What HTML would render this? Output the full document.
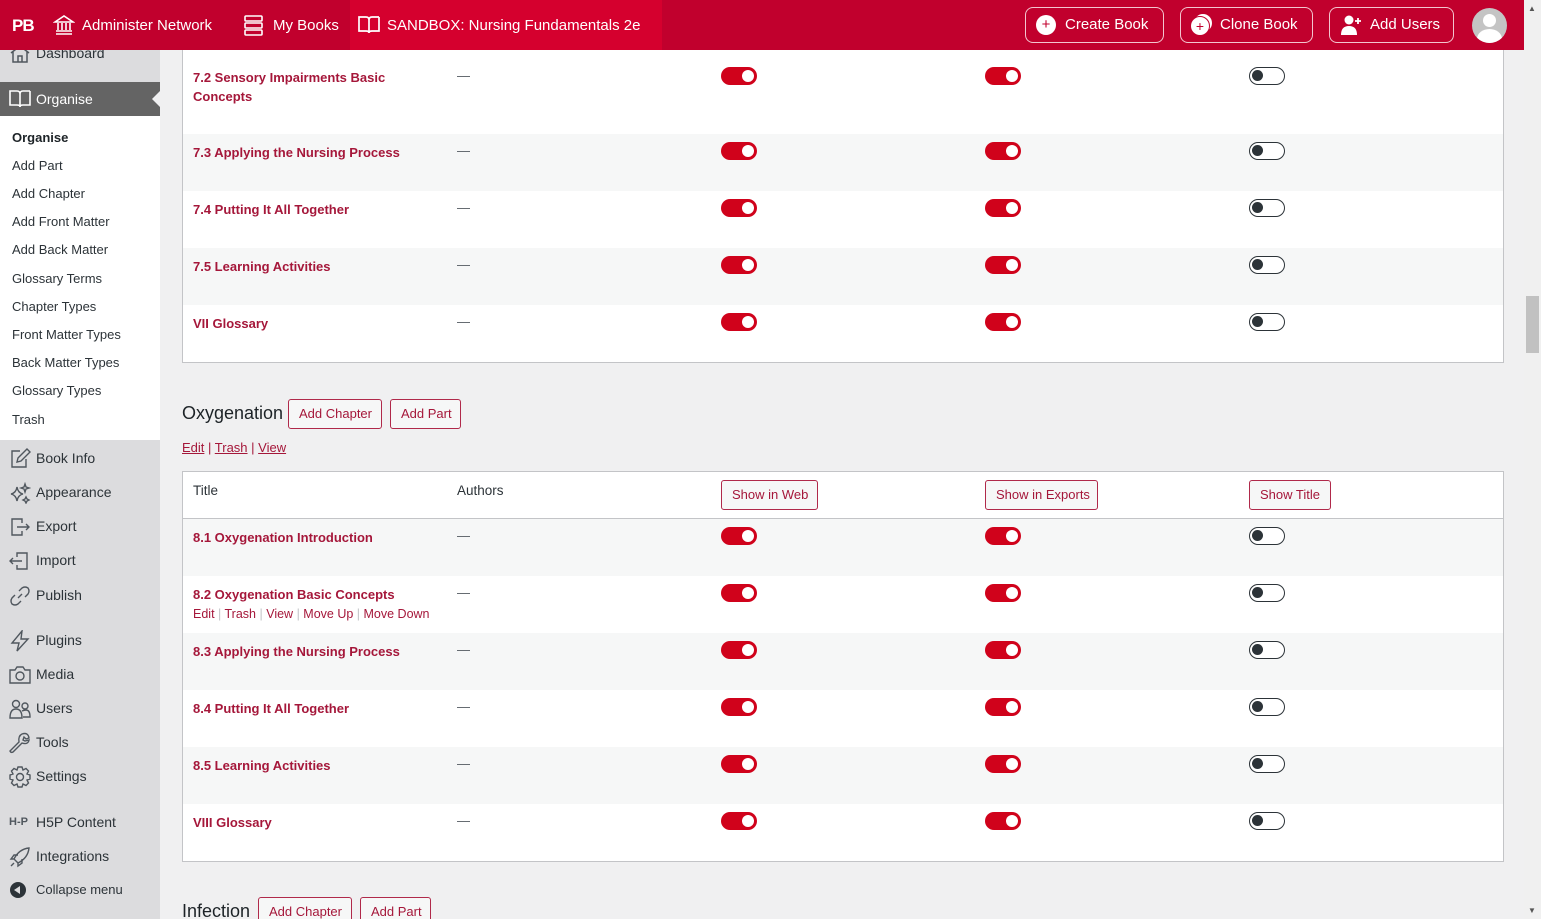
<!DOCTYPE html>
<html style="width:1541px;height:919px;overflow:hidden"><head><meta charset="utf-8">
<style>
*{box-sizing:border-box;margin:0;padding:0}
body{width:1541px;height:919px;overflow:hidden;background:#f0f0f1;font-family:"Liberation Sans",sans-serif;color:#1d2327;position:relative}
.a{position:absolute}
#top{left:0;top:0;width:1524px;height:50px;background:#c1002d;z-index:10}
#top .t{position:absolute;top:1px;height:50px;line-height:50px;color:#fff;font-size:15px;white-space:nowrap}
.tb{position:absolute;top:7px;height:36px;border:1px solid #f3c5cf;border-radius:8px;color:#fff;font-size:15px;line-height:34px;white-space:nowrap}
#side{left:0;top:50px;width:160px;height:869px;background:#dcdcde;z-index:5}
.sub{position:absolute;left:12px;font-size:13px;color:#2c3338}
.mi{position:absolute;left:36px;font-size:14px;color:#2c3338}
.ic{position:absolute;left:9px}
.tbl{position:absolute;left:182px;width:1322px;background:#fff;border:1px solid #c3c4c7}
.row{position:absolute;left:0;width:1320px;height:57px}
.row.g{background:#f6f7f7}
.tt{position:absolute;left:10px;top:9px;font-size:13px;font-weight:bold;color:#a5173a;line-height:19px}
.au{position:absolute;left:274px;top:9px;font-size:13px;color:#50575e}
.on,.off{position:absolute;top:8px;width:36px;height:18px;border-radius:9px}
.on{background:#d0021b}
.on::after{content:"";position:absolute;right:3px;top:3px;width:12px;height:12px;border-radius:50%;background:#fff}
.off{border:1.5px solid #2c3338;background:#fff}
.off::after{content:"";position:absolute;left:2px;top:2px;width:11px;height:11px;border-radius:50%;background:#2c3338}
.btn{position:absolute;height:30px;border:1px solid #b0294a;border-radius:3px;background:#f6f7f7;color:#a5173a;font-size:13px;line-height:28px;padding:0 10px;white-space:nowrap}
.ra{position:absolute;left:10px;top:31px;font-size:12.5px;color:#a5173a}
.ra span{color:#c3c4c7}
h2{position:absolute;font-size:18px;font-weight:normal;color:#1d2327}
.ul{font-size:13px;color:#a5173a}
.ul a{color:#a5173a;text-decoration:underline}
</style></head><body>

<div class="a" id="top">
  <div class="t" style="left:12px;font-weight:bold;font-size:17px;letter-spacing:-1px">PB</div>
  <svg class="a" style="left:53px;top:14px" width="22" height="22" viewBox="0 0 22 22" fill="none" stroke="#fff" stroke-width="1.6"><path d="M2 8 L11 2 L20 8 Z M3 20 H19 M3 17 H19 M5 9 V16 M9 9 V16 M13 9 V16 M17 9 V16"/></svg>
  <div class="t" style="left:82px">Administer Network</div>
  <svg class="a" style="left:243px;top:14px" width="22" height="22" viewBox="0 0 22 22" fill="none" stroke="#fff" stroke-width="1.6"><rect x="2" y="2" width="17" height="5" rx="1"/><rect x="2" y="9" width="17" height="5" rx="1"/><rect x="2" y="16" width="17" height="5" rx="1"/></svg>
  <div class="t" style="left:273px">My Books</div>
  <div class="a" style="left:350px;top:0;width:312px;height:50px;background:#d5002e"></div>
  <svg class="a" style="left:358px;top:15px" width="22" height="20" viewBox="0 0 22 20" fill="none" stroke="#fff" stroke-width="1.7"><path d="M1 2 H8 Q11 2 11 5 V18 Q11 16 8 16 H1 Z M21 2 H14 Q11 2 11 5 M21 2 V16 H14 Q11 16 11 18"/></svg>
  <div class="t" style="left:387px">SANDBOX: Nursing Fundamentals 2e</div>
  <div class="tb" style="left:1025px;width:139px"><span class="a" style="left:10px;top:7px;width:20px;height:20px;border-radius:50%;background:#fff;color:#c1002d;text-align:center;line-height:20px;font-size:15px">+</span><span style="margin-left:39px">Create Book</span></div>
  <div class="tb" style="left:1180px;width:133px"><span class="a" style="left:12px;top:5px;width:20px;height:20px;border-radius:50%;background:#fff;border:1px solid #c1002d"></span><span class="a" style="left:9px;top:8px;width:20px;height:20px;border-radius:50%;background:#fff;border:1px solid #c1002d;color:#c1002d;text-align:center;line-height:18px;font-size:14px">+</span><span style="margin-left:39px">Clone Book</span></div>
  <div class="tb" style="left:1329px;width:125px"><svg class="a" style="left:10px;top:7px" width="24" height="20" viewBox="0 0 24 20" fill="#fff"><circle cx="9" cy="5" r="4.5"/><path d="M1 20 Q1 11 9 11 Q17 11 17 20 Z"/><path d="M18 3 V9 M15 6 H21" stroke="#fff" stroke-width="1.8"/></svg><span style="margin-left:40px">Add Users</span></div>
  <div class="a" style="left:1472px;top:8px;width:35px;height:35px;border-radius:50%;background:#c4c4c4;overflow:hidden"><div class="a" style="left:11px;top:6px;width:13px;height:13px;border-radius:50%;background:#fff"></div><div class="a" style="left:5px;top:21px;width:25px;height:20px;border-radius:50%;background:#fff"></div></div>
</div>

<!-- scrollbar -->
<div class="a" style="left:1524px;top:0;width:17px;height:919px;background:#f0f0f0;z-index:10"></div>
<div class="a" style="left:1526px;top:296px;width:13px;height:57px;background:#c1c1c1;z-index:11"></div>
<div class="a" style="left:1528px;top:4px;font-size:8px;color:#555;z-index:11">▲</div>
<div class="a" style="left:1528px;top:906px;font-size:8px;color:#555;z-index:11">▼</div>

<div class="a" id="side">
  <svg class="a" style="left:9px;top:-6px" width="22" height="20" viewBox="0 0 22 20" fill="none" stroke="#50575e" stroke-width="1.5"><path d="M2 9 L11 2 L20 9 M4 8 V18 H18 V8 M9 18 V12 H13 V18"/></svg>
  <div class="mi" style="top:-5px">Dashboard</div>
  <div class="a" style="left:0;top:32px;width:160px;height:34px;background:#646464"></div>
  <svg class="a" style="left:9px;top:40px" width="22" height="18" viewBox="0 0 22 18" fill="none" stroke="#fff" stroke-width="1.6"><path d="M1 1 H8 Q11 1 11 4 V17 Q11 15 8 15 H1 Z M21 1 H14 Q11 1 11 4 M21 1 V15 H14 Q11 15 11 17"/></svg>
  <div class="mi" style="top:41px;color:#fff">Organise</div>
  <div class="a" style="left:152px;top:41px;width:0;height:0;border-top:8px solid transparent;border-bottom:8px solid transparent;border-right:8px solid #f0f0f1"></div>
  <div class="a" style="left:0;top:66px;width:160px;height:324px;background:#fff"></div>
  <div class="sub" style="top:80px;font-weight:bold;color:#1d2327">Organise</div>
  <div class="sub" style="top:108px">Add Part</div>
  <div class="sub" style="top:136px">Add Chapter</div>
  <div class="sub" style="top:164px">Add Front Matter</div>
  <div class="sub" style="top:192px">Add Back Matter</div>
  <div class="sub" style="top:221px">Glossary Terms</div>
  <div class="sub" style="top:249px">Chapter Types</div>
  <div class="sub" style="top:277px">Front Matter Types</div>
  <div class="sub" style="top:305px">Back Matter Types</div>
  <div class="sub" style="top:333px">Glossary Types</div>
  <div class="sub" style="top:362px">Trash</div>

  <svg class="ic" style="top:398px" width="22" height="22" viewBox="0 0 22 22" fill="none" stroke="#50575e" stroke-width="1.4"><path d="M11 3 H3 V19 H17 V11 M8 14 L9 10 L18 1 L21 4 L12 13 Z"/></svg>
  <div class="mi" style="top:400px">Book Info</div>
  <svg class="ic" style="top:432px" width="22" height="22" viewBox="0 0 22 22" fill="none" stroke="#50575e" stroke-width="1.4"><path d="M8 5 Q9 11 14 12 Q9 13 8 19 Q7 13 2 12 Q7 11 8 5 Z M16 2 L17 5 L20 6 L17 7 L16 10 L15 7 L12 6 L15 5Z M17 15 L18 17 L20 18 L18 19 L17 21 L16 19 L14 18 L16 17Z"/></svg>
  <div class="mi" style="top:434px">Appearance</div>
  <svg class="ic" style="top:466px" width="22" height="22" viewBox="0 0 22 22" fill="none" stroke="#50575e" stroke-width="1.4"><path d="M13 7 V3 H3 V19 H13 V15 M8 11 H20 M17 8 L20 11 L17 14"/></svg>
  <div class="mi" style="top:468px">Export</div>
  <svg class="ic" style="top:500px" width="22" height="22" viewBox="0 0 22 22" fill="none" stroke="#50575e" stroke-width="1.4"><path d="M8 7 V3 H18 V19 H8 V15 M13 11 H1 M4 8 L1 11 L4 14"/></svg>
  <div class="mi" style="top:502px">Import</div>
  <svg class="ic" style="top:535px" width="22" height="22" viewBox="0 0 22 22" fill="none" stroke="#50575e" stroke-width="1.4"><path d="M9 13 L13 9 M10 6 L13 3 Q16 1 19 3 Q21 6 19 9 L16 12 M12 16 L9 19 Q6 21 3 19 Q1 16 3 13 L6 10"/></svg>
  <div class="mi" style="top:537px">Publish</div>
  <svg class="ic" style="top:580px" width="22" height="22" viewBox="0 0 22 22" fill="none" stroke="#50575e" stroke-width="1.4"><path d="M13 1 L3 13 H10 L8 21 L19 9 H12 Z"/></svg>
  <div class="mi" style="top:582px">Plugins</div>
  <svg class="ic" style="top:614px" width="22" height="22" viewBox="0 0 22 22" fill="none" stroke="#50575e" stroke-width="1.4"><path d="M1 6 H6 L8 3 H14 L16 6 H21 V19 H1 Z"/><circle cx="11" cy="12" r="4"/></svg>
  <div class="mi" style="top:616px">Media</div>
  <svg class="ic" style="top:648px" width="22" height="22" viewBox="0 0 22 22" fill="none" stroke="#50575e" stroke-width="1.4"><circle cx="7" cy="6" r="3.5"/><circle cx="16" cy="8" r="3"/><path d="M1 20 Q1 11 7 11 Q13 11 13 20 Z M13 13 Q15 12 17 12 Q21 12 21 19 H14"/></svg>
  <div class="mi" style="top:650px">Users</div>
  <svg class="ic" style="top:682px" width="22" height="22" viewBox="0 0 22 22" fill="none" stroke="#50575e" stroke-width="1.4"><path d="M13 2 Q19 0 20 6 L17 7 L15 5 L14 8 L16 9 L20 8 Q19 13 13 11 L4 20 Q2 21 1 19 L10 10 Q9 4 13 2Z"/></svg>
  <div class="mi" style="top:684px">Tools</div>
  <svg class="ic" style="top:716px" width="22" height="22" viewBox="0 0 22 22" fill="none" stroke="#50575e" stroke-width="1.4"><circle cx="11" cy="11" r="3.5"/><path d="M9 1 H13 L14 4 L17 2.5 L19.5 5 L18 8 L21 9 V13 L18 14 L19.5 17 L17 19.5 L14 18 L13 21 H9 L8 18 L5 19.5 L2.5 17 L4 14 L1 13 V9 L4 8 L2.5 5 L5 2.5 L8 4 Z"/></svg>
  <div class="mi" style="top:718px">Settings</div>
  <div class="a" style="left:9px;top:766px;font-size:11px;font-weight:bold;color:#50575e">H-P</div>
  <div class="mi" style="top:764px">H5P Content</div>
  <svg class="ic" style="top:796px" width="22" height="22" viewBox="0 0 22 22" fill="none" stroke="#50575e" stroke-width="1.4"><path d="M7 15 L5 13 Q10 3 20 2 Q19 12 9 17 Z M5 13 L2 13 L5 9 L9 9 M9 17 L9 20 L13 17 L13 13 M5 17 L2 20"/></svg>
  <div class="mi" style="top:798px">Integrations</div>
  <div class="a" style="left:10px;top:832px;width:16px;height:16px;border-radius:50%;background:#2c3338"></div>
  <div class="a" style="left:14px;top:836px;width:0;height:0;border-top:4px solid transparent;border-bottom:4px solid transparent;border-right:6px solid #dcdcde"></div>
  <div class="mi" style="top:832px;font-size:13px">Collapse menu</div>
</div>

<!-- Table 1 -->
<div class="tbl" style="top:40px;height:323px">
  <div class="row" style="top:18px;height:75px"><div class="tt">7.2 Sensory Impairments Basic<br>Concepts</div><div class="au">—</div><div class="on" style="left:538px"></div><div class="on" style="left:802px"></div><div class="off" style="left:1066px"></div></div>
  <div class="row g" style="top:93px"><div class="tt">7.3 Applying the Nursing Process</div><div class="au">—</div><div class="on" style="left:538px"></div><div class="on" style="left:802px"></div><div class="off" style="left:1066px"></div></div>
  <div class="row" style="top:150px"><div class="tt">7.4 Putting It All Together</div><div class="au">—</div><div class="on" style="left:538px"></div><div class="on" style="left:802px"></div><div class="off" style="left:1066px"></div></div>
  <div class="row g" style="top:207px"><div class="tt">7.5 Learning Activities</div><div class="au">—</div><div class="on" style="left:538px"></div><div class="on" style="left:802px"></div><div class="off" style="left:1066px"></div></div>
  <div class="row" style="top:264px"><div class="tt">VII Glossary</div><div class="au">—</div><div class="on" style="left:538px"></div><div class="on" style="left:802px"></div><div class="off" style="left:1066px"></div></div>
</div>

<h2 style="left:182px;top:403px">Oxygenation</h2>
<div class="btn" style="left:288px;top:399px;width:94px">Add Chapter</div>
<div class="btn" style="left:390px;top:399px;width:71px">Add Part</div>
<div class="a ul" style="left:182px;top:440px"><a>Edit</a> | <a>Trash</a> | <a>View</a></div>

<div class="tbl" style="top:471px;height:391px">
  <div class="a" style="left:10px;top:11px;font-size:13.5px;color:#2c3338">Title</div>
  <div class="a" style="left:274px;top:11px;font-size:13.5px;color:#2c3338">Authors</div>
  <div class="btn" style="left:538px;top:8px;width:97px">Show in Web</div>
  <div class="btn" style="left:802px;top:8px;width:113px">Show in Exports</div>
  <div class="btn" style="left:1066px;top:8px;width:82px">Show Title</div>
  <div class="a" style="left:0;top:46px;width:1320px;height:1px;background:#c3c4c7"></div>
  <div class="row g" style="top:47px"><div class="tt">8.1 Oxygenation Introduction</div><div class="au">—</div><div class="on" style="left:538px"></div><div class="on" style="left:802px"></div><div class="off" style="left:1066px"></div></div>
  <div class="row" style="top:104px"><div class="tt">8.2 Oxygenation Basic Concepts</div><div class="ra">Edit <span>|</span> Trash <span>|</span> View <span>|</span> Move Up <span>|</span> Move Down</div><div class="au">—</div><div class="on" style="left:538px"></div><div class="on" style="left:802px"></div><div class="off" style="left:1066px"></div></div>
  <div class="row g" style="top:161px"><div class="tt">8.3 Applying the Nursing Process</div><div class="au">—</div><div class="on" style="left:538px"></div><div class="on" style="left:802px"></div><div class="off" style="left:1066px"></div></div>
  <div class="row" style="top:218px"><div class="tt">8.4 Putting It All Together</div><div class="au">—</div><div class="on" style="left:538px"></div><div class="on" style="left:802px"></div><div class="off" style="left:1066px"></div></div>
  <div class="row g" style="top:275px"><div class="tt">8.5 Learning Activities</div><div class="au">—</div><div class="on" style="left:538px"></div><div class="on" style="left:802px"></div><div class="off" style="left:1066px"></div></div>
  <div class="row" style="top:332px"><div class="tt">VIII Glossary</div><div class="au">—</div><div class="on" style="left:538px"></div><div class="on" style="left:802px"></div><div class="off" style="left:1066px"></div></div>
</div>

<h2 style="left:182px;top:901px">Infection</h2>
<div class="btn" style="left:258px;top:897px;width:94px">Add Chapter</div>
<div class="btn" style="left:360px;top:897px;width:71px">Add Part</div>

</body></html>
